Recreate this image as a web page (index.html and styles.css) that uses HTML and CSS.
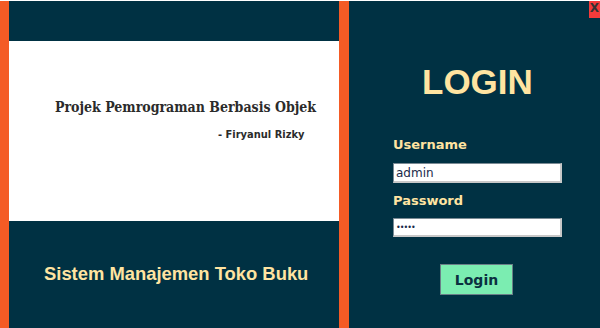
FILE: index.html
```html
<!DOCTYPE html>
<html>
<head>
<meta charset="utf-8">
<link rel="stylesheet" href="styles.css">
</head>
<body>
<div class="topline"></div>
<div class="frame">
  <div class="stripe stripe-left"></div>
  <div class="left">
    <div class="left-top"></div>
    <div class="left-white">
      <div class="project-title">Projek Pemrograman Berbasis Objek</div>
      <div class="author">- Firyanul Rizky</div>
    </div>
    <div class="left-bottom">
      <div class="app-name">Sistem Manajemen Toko Buku</div>
    </div>
  </div>
  <div class="stripe stripe-mid"></div>
  <div class="right">
    <div class="close">X</div>
    <div class="login-title">LOGIN</div>
    <div class="form">
      <label class="field-label">Username</label>
      <input class="field" type="text" value="admin">
      <label class="field-label label-pass">Password</label>
      <input class="field field-pass" type="password" value="admin">
      <div class="btn-row"><button class="btn">Login</button></div>
    </div>
  </div>
</div>
</body>
</html>
```
FILE: styles.css
```css
html, body {
  margin: 0;
  padding: 0;
  width: 600px;
  height: 328px;
  overflow: hidden;
  background: #ffffff;
}
.topline {
  height: 1px;
  background: #ffffff;
}
.frame {
  display: flex;
  height: 327px;
  background: #003143;
}
.stripe {
  background: #f45b25;
}
.stripe-left { width: 9px; }
.stripe-mid { width: 10px; }
.left {
  width: 330px;
  display: flex;
  flex-direction: column;
}
.left-top {
  height: 40px;
  background: #003143;
}
.left-white {
  height: 180px;
  background: #ffffff;
  display: flex;
  flex-direction: column;
}
.project-title {
  font-family: "DejaVu Serif Condensed", "DejaVu Serif", serif;
  font-weight: bold;
  font-size: 14px;
  color: #2b2b2b;
  margin: 57px 0 0 46px;
  line-height: 18px;
  white-space: nowrap;
}
.author {
  font-family: "DejaVu Sans Condensed", "DejaVu Sans", sans-serif;
  font-weight: bold;
  font-size: 11px;
  color: #2b2b2b;
  margin: 12px 0 0 209px;
  line-height: 14px;
  white-space: nowrap;
}
.left-bottom {
  flex: 1;
  background: #003143;
  display: flex;
  padding: 43px 0 0 35px;
}
.app-name {
  font-family: "Liberation Sans", Arial, sans-serif;
  font-weight: bold;
  font-size: 18.4px;
  color: #ffe4a1;
  line-height: 20px;
  white-space: nowrap;
}
.right {
  flex: 1;
  position: relative;
  display: flex;
  flex-direction: column;
}
.close {
  position: absolute;
  top: 0;
  right: 0;
  width: 11px;
  height: 17px;
  background: #f43b3b;
  color: #333333;
  font-family: "DejaVu Sans", sans-serif;
  font-weight: bold;
  font-size: 12px;
  line-height: 14px;
  text-align: center;
}
.login-title {
  font-family: "Liberation Sans", Arial, sans-serif;
  font-weight: bold;
  font-size: 35px;
  color: #ffe4a1;
  margin: 61px 0 0 73px;
  line-height: 40px;
}
.form {
  display: flex;
  flex-direction: column;
  padding-left: 44px;
  margin-top: 35px;
}
.field-label {
  font-family: "DejaVu Sans", sans-serif;
  font-weight: bold;
  font-size: 13px;
  color: #ffe4a1;
  line-height: 16px;
}
.field {
  width: 169px;
  height: 20px;
  box-sizing: border-box;
  margin-top: 10px;
  border: 1px solid #7a8a94;
  border-right: 2px solid #c8c8c8;
  border-bottom: 2px solid #c8c8c8;
  background: #ffffff;
  padding: 0 2px;
  font-family: "DejaVu Sans", sans-serif;
  font-size: 12px;
  color: #1a2a4a;
  outline: none;
}
.label-pass {
  margin-top: 10px;
}
.field-pass {
  height: 19px;
  margin-top: 9px;
  font-size: 8px;
  letter-spacing: -1px;
}
.btn-row {
  display: flex;
  padding-left: 47px;
  margin-top: 27px;
}
.btn {
  width: 73px;
  height: 31px;
  background: #7bedb1;
  border: 1px solid #6b7f88;
  font-family: "DejaVu Sans", sans-serif;
  font-weight: bold;
  font-size: 14px;
  color: #0b3040;
  padding: 0;
}
```
